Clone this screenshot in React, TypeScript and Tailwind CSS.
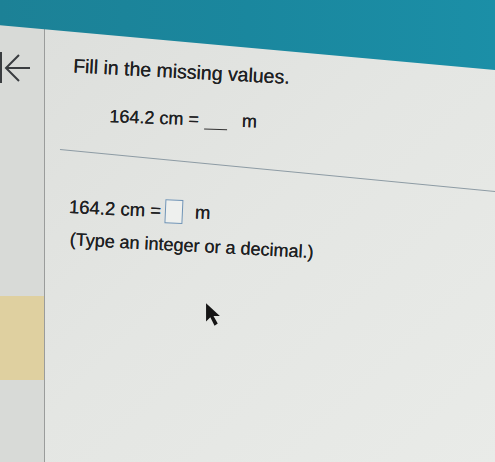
import React from "react";

function BackArrow() {
  return (
    <svg width="34" height="36" viewBox="0 0 34 36" fill="none" stroke="#3a3d40" strokeWidth="2">
      <path d="M2 2 L2 33" />
      <path d="M31 18 L8 18" />
      <path d="M20 5 L7 18 L20 31" />
    </svg>
  );
}

function Cursor() {
  return (
    <svg width="17" height="26" viewBox="0 0 16 24">
      <path d="M1 1 L1 18 L5 14 L9 22 L12 20 L8 13 L14 13 Z" fill="#151515" />
    </svg>
  );
}

export default function App() {
  return (
    <div
      className="relative w-[495px] h-[462px] overflow-hidden bg-gradient-to-br from-[#dcdedb] via-[#e4e6e3] to-[#e9ebe8] text-[#1f2123] [text-shadow:0_0_0.6px_#1f2123]"
      style={{ fontFamily: '"Liberation Sans", Arial, sans-serif' }}
    >
      {/* teal header band */}
      <div className="h-[70px] bg-gradient-to-r from-[#1c8196] via-[#1a879e] to-[#1b8fa7] [clip-path:polygon(0_0,100%_0,100%_100%,0_36%)]" />

      <div className="flex h-[437px] -mt-[45px]">
        {/* left rail */}
        <div className="w-[45px] shrink-0 flex flex-col border-r border-[#9a9c9b] bg-[#d8dad7]">
          <div className="pt-[25px] -ml-[1px]">
            <BackArrow />
          </div>
          <div className="mt-[210px] h-[84px] bg-[#dfd0a0]" />
        </div>

        {/* main */}
        <div className="flex-1 flex flex-col">
          <div className="pl-[29px] pt-[27px] text-[19.5px] leading-[24px] origin-left rotate-[3deg]">
            Fill in the missing values.
          </div>
          <div className="pl-[65px] pt-[27px] flex items-end text-[18px] leading-[22px] origin-left rotate-[2deg]">
            <span>164.2 cm =</span>
            <span className="ml-[5px] mb-[1px] w-[23px] border-b-[1.5px] border-[#333]" />
            <span className="ml-[15px]">m</span>
          </div>
          <div className="mt-[24px] ml-[15px] h-px bg-[#8d9ba4] origin-left rotate-[5.5deg] w-[460px]" />
          <div className="pl-[25px] pt-[44px] flex items-center text-[18.5px] leading-[24px] origin-left rotate-[2.5deg]">
            <span>164.2 cm =</span>
            <span className="ml-[4px] w-[18px] h-[24px] border-[1.5px] border-[#6f93b5] bg-[#eef0ee]" />
            <span className="ml-[12px]">m</span>
          </div>
          <div className="pl-[25px] pt-[9px] text-[18px] leading-[22px] origin-left rotate-[3deg]">
            (Type an integer or a decimal.)
          </div>
          <div className="pl-[160px] pt-[53px]">
            <Cursor />
          </div>
        </div>
      </div>
    </div>
  );
}
